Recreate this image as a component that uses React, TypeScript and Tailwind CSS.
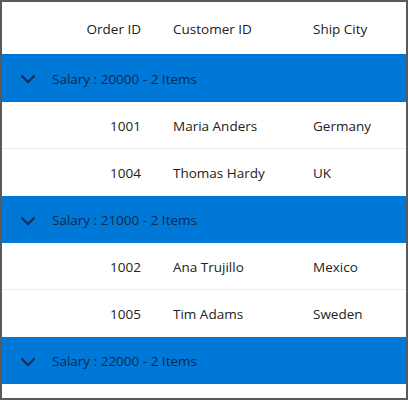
const groups = [
  {
    salary: 20000,
    rows: [
      { id: 1001, customer: 'Maria Anders', city: 'Germany' },
      { id: 1004, customer: 'Thomas Hardy', city: 'UK' },
    ],
  },
  {
    salary: 21000,
    rows: [
      { id: 1002, customer: 'Ana Trujillo', city: 'Mexico' },
      { id: 1005, customer: 'Tim Adams', city: 'Sweden' },
    ],
  },
  { salary: 22000, rows: [] },
];

const Chevron = () => (
  <svg width="16" height="10" viewBox="0 0 16 10" className="shrink-0">
    <path d="M1.5 1.5 L8 8 L14.5 1.5" fill="none" stroke="#12325a" strokeWidth="2.4" />
  </svg>
);

const GroupRow = ({ salary, count, first }: { salary: number; count: number; first: boolean }) => (
  <div className={`flex items-center bg-[#0078d7] pt-[2px] text-[#0c2a4e] ${first ? 'h-[48px]' : 'h-[47px]'}`}>
    <div className="flex w-[50px] justify-center pl-[2px]">
      <Chevron />
    </div>
    <span>
      Salary : {salary} - {count} Items
    </span>
  </div>
);

export default function App() {
  return (
    <div
      className="h-[400px] w-[408px] overflow-hidden border-2 border-[#5a5a5a] bg-white text-[13.5px] text-[#222]"
      style={{ fontFamily: '"Open Sans", "Noto Sans", sans-serif' }}
    >
      <div className="flex h-[52px] items-center pt-[2px]">
        <div className="w-[139px] text-right">Order ID</div>
        <div className="w-[172px] pl-[32px]">Customer ID</div>
        <div>Ship City</div>
      </div>
      {groups.map((g, gi) => (
        <div key={g.salary}>
          <GroupRow salary={g.salary} count={2} first={gi === 0} />
          {g.rows.map((r, i) => (
            <div
              key={r.id}
              className={`flex h-[47px] items-center pt-[2px] ${i === 0 ? 'border-b border-[#ececec]' : ''}`}
            >
              <div className="w-[139px] text-right">{r.id}</div>
              <div className="w-[172px] pl-[32px]">{r.customer}</div>
              <div>{r.city}</div>
            </div>
          ))}
        </div>
      ))}
    </div>
  );
}
